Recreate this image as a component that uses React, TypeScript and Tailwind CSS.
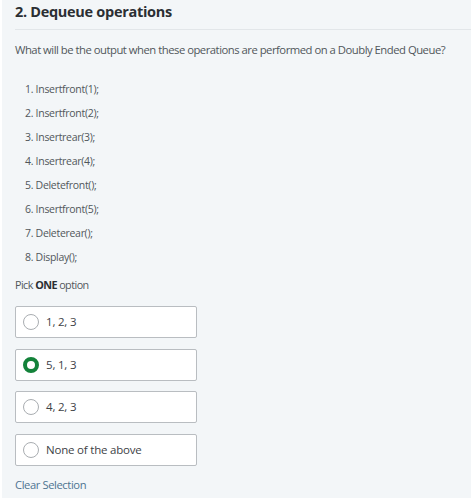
import React from 'react';

const steps = [
  'Insertfront(1);',
  'Insertfront(2);',
  'Insertrear(3);',
  'Insertrear(4);',
  'Deletefront();',
  'Insertfront(5);',
  'Deleterear();',
  'Display();',
];

const options = ['1, 2, 3', '5, 1, 3', '4, 2, 3', 'None of the above'];

const Radio: React.FC<{ checked: boolean }> = ({ checked }) =>
  checked ? (
    <span className="w-4 h-4 rounded-full border-[4px] border-[#13823a] bg-white shrink-0" />
  ) : (
    <span className="w-4 h-4 rounded-full border border-[#a9adb1] bg-white shrink-0" />
  );

export default function App() {
  return (
    <div className="w-[474px] h-[502px] bg-white pl-[2px] pr-[3px] pb-[4px] font-['Open_Sans',sans-serif]">
      <div className="h-full bg-[#f3f6f8] pl-[13px]">
        <div className="h-[30px] border-b border-[#e2e6e9] flex items-center">
          <h2 className="text-[14.5px] font-bold text-[#2b2f33] leading-none tracking-[-0.3px] -mt-[4px]">
            2. Dequeue operations
          </h2>
        </div>
        <p className="mt-[12px] text-[11.3px] text-[#51565b] leading-[16px] tracking-[-0.5px] whitespace-nowrap">
          What will be the output when these operations are performed on a Doubly Ended Queue?
        </p>
        <ol className="mt-[23px] pl-[10px] flex flex-col gap-[8px] text-[10.5px] text-[#51565b] leading-[16px] tracking-[-0.3px]">
          {steps.map((s, i) => (
            <li key={i}>
              {i + 1}. {s}
            </li>
          ))}
        </ol>
        <p className="mt-[12px] text-[10.8px] text-[#51565b] leading-[16px] tracking-[-0.55px]">
          Pick <span className="font-bold text-[#2b2f33]">ONE</span> option
        </p>
        <div className="mt-[13px] flex flex-col gap-[10.5px]">
          {options.map((o, i) => (
            <div
              key={o}
              className="w-[182px] h-[32px] bg-white border border-[#b9bdc1] rounded-[2px] flex items-center gap-[7px] pl-[7px]"
            >
              <Radio checked={i === 1} />
              <span className="text-[11.5px] text-[#3d4246] tracking-[-0.2px]">{o}</span>
            </div>
          ))}
        </div>
        <div className="mt-[11px] text-[11.2px] text-[#4e7491] tracking-[-0.4px]">Clear Selection</div>
      </div>
    </div>
  );
}
